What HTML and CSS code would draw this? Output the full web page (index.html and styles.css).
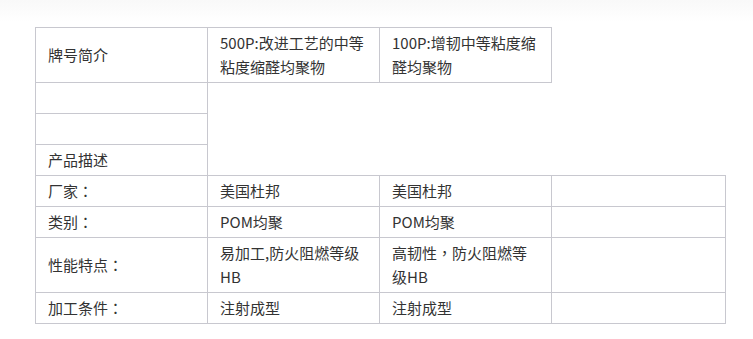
FILE: index.html
```html
<!DOCTYPE html>
<html lang="zh-CN">
<head>
<meta charset="utf-8">
<title>牌号简介</title>
<link rel="stylesheet" href="styles.css">
</head>
<body>
<div class="page">
<table class="spec">
<colgroup>
<col class="c1"><col class="c2"><col class="c3"><col class="c4">
</colgroup>
<tbody>
<tr>
<td>牌号简介</td>
<td>500P:改进工艺的中等粘度缩醛均聚物</td>
<td>100P:增韧中等粘度缩醛均聚物</td>
</tr>
<tr><td>&nbsp;</td></tr>
<tr><td>&nbsp;</td></tr>
<tr><td>产品描述</td></tr>
<tr><td>厂家<span class="punct" lang="zh-TW">：</span></td><td>美国杜邦</td><td>美国杜邦</td><td></td></tr>
<tr><td>类别<span class="punct" lang="zh-TW">：</span></td><td>POM均聚</td><td>POM均聚</td><td></td></tr>
<tr><td>性能特点<span class="punct" lang="zh-TW">：</span></td><td>易加工,防火阻燃等级HB</td><td>高韧性<span class="punct" lang="zh-TW">，</span>防火阻燃等级HB</td><td></td></tr>
<tr><td>加工条件<span class="punct" lang="zh-TW">：</span></td><td>注射成型</td><td>注射成型</td><td></td></tr>
</tbody>
</table>
</div>
</body>
</html>
```

FILE: styles.css
```css
html, body {
  margin: 0;
  padding: 0;
}
body {
  background: linear-gradient(#f9f9f9 0, #fcfcfc 12px, #ffffff 22px) no-repeat;
  background-color: #ffffff;
  font-family: "Noto Sans CJK SC", "Noto Sans", sans-serif;
  font-size: 15px;
  color: #333333;
}
.page {
  padding: 27px 0 0 35px;
}
.spec {
  border-collapse: collapse;
  table-layout: fixed;
  width: 690px;
}
.c1, .c2, .c3 { width: 172px; }
.c4 { width: 174px; }
.spec td {
  border: 1px solid #c8c8cf;
  padding: 3px 12px;
  line-height: 24px;
  height: 24px;
  vertical-align: middle;
  word-break: break-all;
}
.punct {
  font-family: "Noto Sans CJK TC", "Noto Sans CJK SC", sans-serif;
}
```
